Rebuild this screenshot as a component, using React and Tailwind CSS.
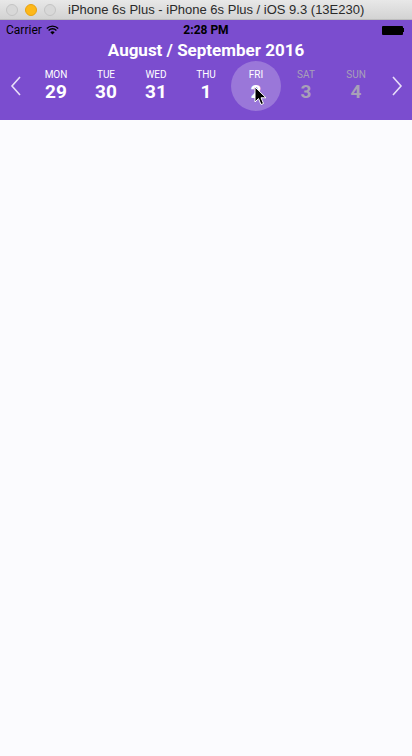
import React from "react";

const days = [
  { l: "MON", n: "29" },
  { l: "TUE", n: "30" },
  { l: "WED", n: "31" },
  { l: "THU", n: "1" },
  { l: "FRI", n: "2", sel: true },
  { l: "SAT", n: "3", dim: true },
  { l: "SUN", n: "4", dim: true },
];

export default function App() {
  return (
    <div className="w-[412px] h-[756px] bg-[#fbfbfe] flex flex-col" style={{ fontFamily: "Roboto, 'Liberation Sans', sans-serif" }}>
      <div className="h-[20px] bg-gradient-to-b from-[#e8e8e8] to-[#d3d3d3] flex items-center px-[6px] gap-[7px] border-b border-[#bdbdbd]">
        <span className="w-[12px] h-[12px] rounded-full bg-[#d8d8d8] border border-[#c4c4c4]" />
        <span className="w-[12px] h-[12px] rounded-full bg-[#fdb81a] border border-[#e8a10f]" />
        <span className="w-[12px] h-[12px] rounded-full bg-[#d8d8d8] border border-[#c4c4c4]" />
        <span className="ml-[5px] text-[13px] text-[#2a2a2a]" style={{ fontFamily: "'Liberation Sans', sans-serif" }}>iPhone 6s Plus - iPhone 6s Plus / iOS 9.3 (13E230)</span>
      </div>
      <div className="h-[100px] bg-[#7b4dcf] flex flex-col text-white">
        <div className="h-[20px] flex items-center justify-between px-[6px] relative text-[12px] text-black">
          <div className="flex items-center gap-[4px]">
            <span>Carrier</span>
            <svg width="13" height="10" viewBox="0 0 13 10">
              <path d="M6.5 9.5 L4.3 7.2 A3.2 3.2 0 0 1 8.7 7.2 Z" fill="black" />
              <path d="M2.6 5.4 A5.6 5.6 0 0 1 10.4 5.4" stroke="black" strokeWidth="1.4" fill="none" />
              <path d="M0.8 3.4 A8.2 8.2 0 0 1 12.2 3.4" stroke="black" strokeWidth="1.4" fill="none" />
            </svg>
          </div>
          <span className="absolute left-1/2 -translate-x-1/2 font-bold">2:28 PM</span>
          <div className="flex items-center pr-[2px]">
            <span className="w-[21px] h-[9px] bg-black rounded-[1px]" />
            <span className="w-[1.5px] h-[4px] bg-black" />
          </div>
        </div>
        <div className="h-[21px] flex items-center justify-center text-[17px] font-bold">August / September 2016</div>
        <div className="flex-1 flex items-start">
          <div className="w-[34px] h-[50px] flex items-center justify-center">
            <svg width="12" height="20" viewBox="0 0 12 20"><path d="M10 1 L2 10 L10 19" stroke="#e8def8" strokeWidth="1.6" fill="none" /></svg>
          </div>
          <div className="flex-1 flex">
            {days.map((d) => (
              <div key={d.l} className="flex-1 flex justify-center">
                <div className={`relative w-[50px] h-[50px] rounded-full flex flex-col items-center justify-center ${d.sel ? "bg-[#9a77d9]" : ""}`}>
                  <span className={`text-[10px] leading-[12px] ${d.dim ? "text-[#a8a0b8]" : "text-white"}`}>{d.l}</span>
                  <span className={`text-[19px] leading-[22px] font-bold ${d.dim ? "text-[#a8a0b8]" : "text-white"}`}>{d.n}</span>
                  {d.sel && (
                    <svg className="absolute left-[23px] top-[25px]" width="14" height="20" viewBox="0 0 14 20">
                      <path d="M1 1 L1 16 L4.5 12.5 L7 18.5 L9.5 17.5 L7 11.8 L12 11.8 Z" fill="black" stroke="white" strokeWidth="1" />
                    </svg>
                  )}
                </div>
              </div>
            ))}
          </div>
          <div className="w-[34px] h-[50px] flex items-center justify-center">
            <svg width="12" height="20" viewBox="0 0 12 20"><path d="M2 1 L10 10 L2 19" stroke="#e8def8" strokeWidth="1.6" fill="none" /></svg>
          </div>
        </div>
      </div>
      <div className="flex-1" />
    </div>
  );
}
